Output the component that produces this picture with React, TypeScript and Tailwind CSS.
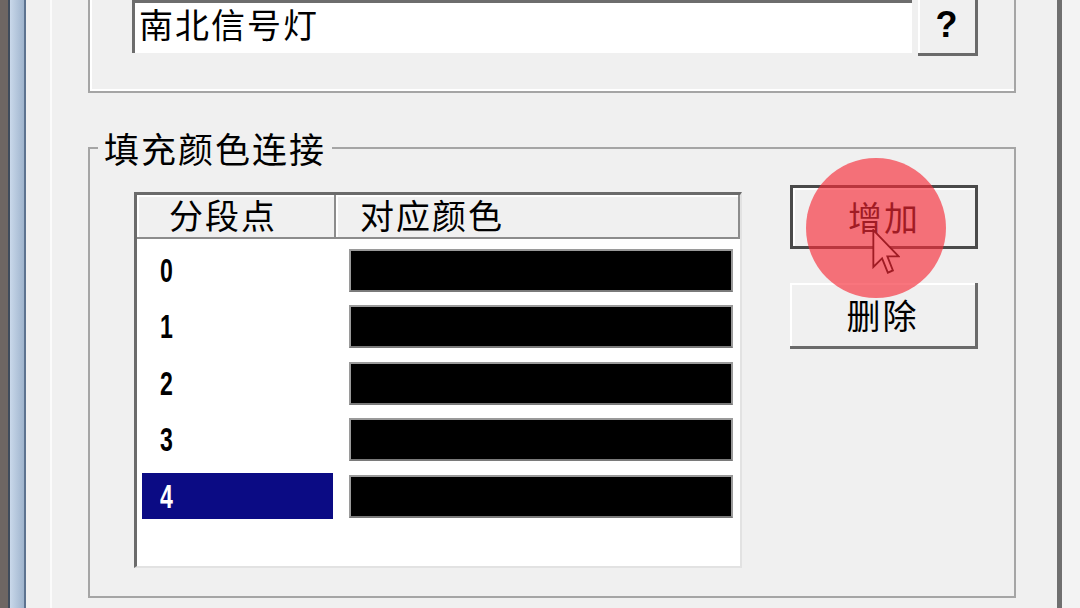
export default function App() {
  const points = [0, 1, 2, 3, 4];
  const selected = 4;

  return (
    <div className="relative flex h-[608px] w-[1080px] overflow-hidden bg-[#f0f0f0] font-['Noto_Sans_CJK_SC',sans-serif] text-black">
      {/* window frame on the left */}
      <div className="flex h-full w-[26px] shrink-0">
        <div className="w-[8px] bg-[#6e6663]" />
        <div className="w-[2px] bg-[#3f4b5b]" />
        <div className="w-[14px] bg-gradient-to-r from-[#c9d8ea] to-[#9fb4cd]" />
        <div className="w-[2px] bg-[#5d7390]" />
      </div>
      <div className="w-[24px] shrink-0" />
      <div className="w-[2px] shrink-0 bg-[#fbfbfb]" />
      <div className="w-[36px] shrink-0" />

      {/* dialog body */}
      <div className="flex w-[928px] shrink-0 flex-col">
        {/* name group (top cut off) */}
        <div className="flex h-[93px] items-start border-x-2 border-b-2 border-[#a5a5a5] pl-[42px] pr-[36px] shadow-[inset_2px_0_0_#fff,inset_0_-2px_0_#fff]">
          <div className="h-[53px] flex-1 border-l-[3px] border-t-[3px] border-[#6d6d6d] bg-white pl-[4px] text-[34px] leading-[42px] tracking-[2px]">
            南北信号灯
          </div>
          <button className="ml-[6px] flex h-[56px] w-[60px] items-center justify-center border-b-[3px] border-r-[3px] border-[#6a6a6a] bg-[#f0f0f0] pb-[4px] font-['Liberation_Sans',sans-serif] text-[36px] font-bold leading-none shadow-[inset_2px_0_0_#fff]">
            ?
          </button>
        </div>

        {/* fill colour group */}
        <fieldset className="mt-[35px] h-[470px] border-2 border-[#a5a5a5]">
          <legend className="ml-[8px] px-[6px] text-[35px] leading-[40px] tracking-[2px]">填充颜色连接</legend>
          <div className="flex items-start pl-[44px]">
            {/* list */}
            <div className="mt-[24px] flex h-[376px] w-[608px] flex-col border-b-2 border-l-[3px] border-r-2 border-t-[3px] border-b-[#e2e2e2] border-l-[#6b6b6b] border-r-[#e2e2e2] border-t-[#6b6b6b] bg-white">
              <div className="flex h-[44px] shrink-0 bg-[#f0f0f0] text-[34px] leading-[40px] tracking-[2px]">
                <div className="w-[199px] border-b-2 border-r-2 border-[#8c8c8c] pl-[32px] shadow-[inset_2px_2px_0_#fff]">
                  分段点
                </div>
                <div className="flex-1 border-b-2 border-r-2 border-[#8c8c8c] pl-[24px] shadow-[inset_2px_2px_0_#fff]">
                  对应颜色
                </div>
              </div>
              <div className="flex flex-col pt-[3px]">
                {points.map((p) => (
                  <div key={p} className="flex h-[56.5px] items-center">
                    <div className="flex w-[199px] items-center">
                      <div
                        className={`ml-[5px] flex h-[46px] w-[191px] items-center pl-[18px] ${
                          p === selected ? 'bg-[#0b0b84] text-white' : ''
                        }`}
                      >
                        <span className="inline-block origin-left scale-x-[0.7] font-['Liberation_Sans',sans-serif] text-[33px] font-bold leading-none">
                          {p}
                        </span>
                      </div>
                    </div>
                    <div className="ml-[13px] h-[43px] w-[384px] border-2 border-[#9a9a9a] border-b-[#7a7a7a] bg-black" />
                  </div>
                ))}
              </div>
            </div>

            {/* buttons */}
            <div className="ml-[48px] mt-[17px] flex w-[188px] flex-col">
              <button className="flex h-[64px] items-center justify-center border-[3px] border-[#4a4a4a] bg-[#f0f0f0] text-[34px] leading-none tracking-[2px] shadow-[inset_2px_2px_0_#fff]">
                增加
              </button>
              <button className="mt-[34px] flex h-[66px] items-center justify-center border-b-[3px] border-r-[3px] border-[#6a6a6a] bg-[#f0f0f0] text-[34px] leading-none tracking-[2px] shadow-[inset_2px_2px_0_#fff]">
                删除
              </button>
            </div>
          </div>
        </fieldset>
      </div>

      {/* window frame on the right */}
      <div className="w-[41px] shrink-0" />
      <div className="w-[5px] shrink-0 bg-[#6f6f6f]" />
      <div className="flex-1 bg-[#f3f3f3]" />

      {/* mouse cursor and click highlight */}
      <svg className="absolute left-[872px] top-[229px]" width="28" height="46" viewBox="0 0 12 20">
        <path d="M0.5 0.5 L0.5 16.5 L4.3 12.8 L6.8 19 L9 18 L6.6 11.9 L11.5 11.9 Z" fill="#fff" stroke="#000" strokeWidth="0.8" strokeLinejoin="miter" />
      </svg>
      <div className="absolute left-[806px] top-[158px] h-[140px] w-[140px] rounded-full bg-[rgba(246,43,55,0.65)]" />
    </div>
  );
}
